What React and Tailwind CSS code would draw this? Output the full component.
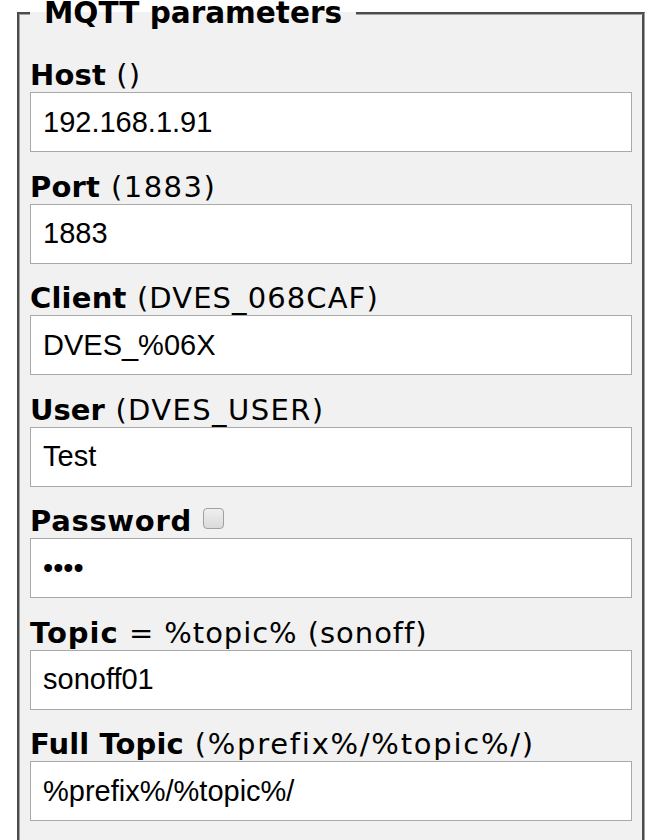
import { useState } from 'react';

const LABEL_FONT = { fontFamily: "'DejaVu Sans', Verdana, sans-serif" };

// Verdana (used by the original page) runs wider than DejaVu, so hints get some tracking
const fields = [
  { key: 'host', label: 'Host', hint: '()', value: '192.168.1.91', hintCls: 'tracking-[1px]', boldCls: 'tracking-[0.2px]' },
  { key: 'port', label: 'Port', hint: '(1883)', value: '1883', hintCls: 'tracking-[1.5px]', boldCls: 'tracking-[0.2px]' },
  { key: 'client', label: 'Client', hint: '(DVES_068CAF)', value: 'DVES_%06X', hintCls: 'tracking-[1.1px]', boldCls: 'tracking-[0.2px]' },
  { key: 'user', label: 'User', hint: '(DVES_USER)', value: 'Test', hintCls: 'tracking-[1.4px]', boldCls: 'tracking-[0px]' },
  { key: 'password', label: 'Password', checkbox: true, value: 'abcd', type: 'password', hintCls: '', boldCls: 'tracking-[0.7px]' },
  { key: 'topic', label: 'Topic', hint: '= %topic% (sonoff)', value: 'sonoff01', hintCls: 'tracking-[0.95px]', boldCls: 'tracking-[1px]' },
  { key: 'fulltopic', label: 'Full Topic', hint: '(%prefix%/%topic%/)', value: '%prefix%/%topic%/', hintCls: 'tracking-[1.75px]', boldCls: 'tracking-[0.1px]' },
];

function Field({ field, first }) {
  const [value, setValue] = useState(field.value);
  return (
    <div className={first ? '' : 'mt-[17.5px]'}>
      <div className="text-[29px] leading-[34px] text-black whitespace-nowrap font-['DejaVu_Sans',Verdana,sans-serif]">
        <b className={field.boldCls}>{field.label}</b>
        {field.hint && <span className={field.hintCls}> {field.hint}</span>}
        {field.checkbox && (
          <>
            {' '}
            <span className="inline-block w-[21px] h-[21px] ml-[2px] mb-[2px] rounded-[4px] border border-[#a0a0a0] bg-gradient-to-b from-[#efefef] to-[#dadada] align-baseline" />
          </>
        )}
      </div>
      <input
        type={field.type || 'text'}
        value={value}
        onChange={(e) => setValue(e.target.value)}
        className="block w-full h-[60px] px-[12px] bg-white border border-[#a9a9a9] text-[29px] text-black outline-none font-['Liberation_Sans',Arial,sans-serif]"
      />
    </div>
  );
}

export default function App() {
  return (
    <div className="min-h-[840px] bg-white overflow-hidden" style={LABEL_FONT}>
      <fieldset className="ml-[17px] mr-[12px] -mt-[3px] min-h-[900px] px-[10px] pt-[29px] pb-[20px] bg-[#f1f1f1] border-[3px] [border-style:groove] border-[#a0a0a0]">
        <legend className="px-[14px] text-[29.5px] leading-[32px] font-bold text-black">
          MQTT parameters
        </legend>
        {fields.map((f, i) => (
          <Field key={f.key} field={f} first={i === 0} />
        ))}
      </fieldset>
    </div>
  );
}
